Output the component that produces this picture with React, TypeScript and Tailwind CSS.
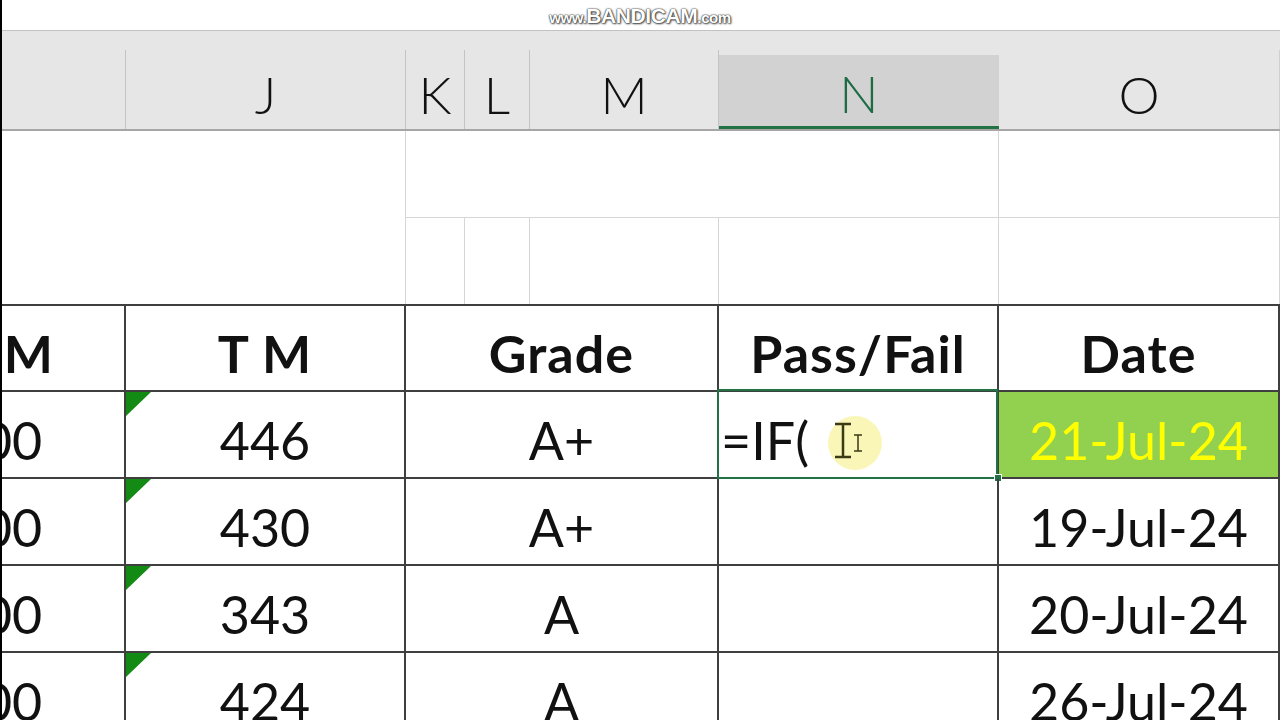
import React from 'react';

const GRID = 'grid grid-cols-[256px_280px_59px_65px_189px_280px_281px] ml-[-130px] w-[1410px]';
const FONT = "font-['Lato','Open_Sans',sans-serif]";

const ROWS = [
  { max: '500', total: '446', grade: 'A+', date: '21-Jul-24' },
  { max: '500', total: '430', grade: 'A+', date: '19-Jul-24' },
  { max: '500', total: '343', grade: 'A', date: '20-Jul-24' },
  { max: '500', total: '424', grade: 'A', date: '26-Jul-24' },
];

function ErrorMark() {
  return (
    <svg className="absolute left-0 top-0" width="25" height="24" viewBox="0 0 25 24">
      <polygon points="0,0 25,0 0,24" fill="#138a13" />
    </svg>
  );
}

function Cursor() {
  return (
    <div className="absolute left-[109px] top-[24px] h-[54px] w-[54px] rounded-full bg-[#f8f29a]/70">
      <svg className="absolute left-0 top-0" width="54" height="54" viewBox="0 0 54 54">
        <g stroke="#3b3a14" fill="none" strokeWidth="2.5">
          <path d="M7 8 H23 M7 41 H23 M15 8 V41" />
        </g>
        <g stroke="#3b3a14" fill="none" strokeWidth="1.5">
          <path d="M26 19 H34 M26 35 H34 M30 19 V35" />
        </g>
      </svg>
    </div>
  );
}

function HeaderLetter({ label, active, last }: { label: string; active?: boolean; last?: boolean }) {
  return (
    <div className="flex h-full flex-col justify-end">
      {active ? (
        <div className="flex h-[74px] items-center justify-center border-b-[3px] border-[#217346] bg-[#d2d2d2] pt-[4px] text-[#1f6b45]">
          {label}
        </div>
      ) : (
        <div
          className={`flex h-[79px] items-center justify-center pt-[8px] ${
            last ? 'border-r border-[#cfcfcf]' : 'border-r border-[#c4c4c4]'
          }`}
        >
          {label}
        </div>
      )}
    </div>
  );
}

export default function App() {
  return (
    <div className={`relative h-[720px] w-[1280px] overflow-hidden bg-white ${FONT} text-[#111]`}>
      {/* recorder watermark */}
      <div className="flex h-[30px] items-center justify-center pt-[1px]">
        <span className="font-['Liberation_Sans',sans-serif] font-bold tracking-tight text-white [text-shadow:0_0_1px_#222,0_0_2px_#333,1px_1px_2px_#555]">
          <span className="text-[15px]">www.</span>
          <span className="text-[21px]">BANDICAM</span>
          <span className="text-[15px]">.com</span>
        </span>
      </div>

      {/* column letters */}
      <div className="h-[101px] border-y border-b-2 border-t-[#c2c2c2] border-b-[#a6a6a6] bg-[#e6e6e6]">
        <div className={`${GRID} h-full text-[52px] font-light leading-none`}>
          <HeaderLetter label="" />
          <HeaderLetter label="J" />
          <HeaderLetter label="K" />
          <HeaderLetter label="L" />
          <HeaderLetter label="M" />
          <HeaderLetter label="N" active />
          <HeaderLetter label="O" last />
        </div>
      </div>

      {/* empty rows above the table */}
      <div className={`${GRID} grid-rows-[87px_86px]`}>
        <div className="col-span-2 row-span-2 border-r border-[#d6d6d6]" />
        <div className="col-span-4 border-b border-r border-[#d6d6d6]" />
        <div className="border-b border-r border-[#d6d6d6]" />
        <div className="border-r border-[#d6d6d6]" />
        <div className="border-r border-[#d6d6d6]" />
        <div className="border-r border-[#d6d6d6]" />
        <div className="border-r border-[#d6d6d6]" />
        <div className="border-r border-[#d6d6d6]" />
      </div>

      {/* table */}
      <div className="border-t-2 border-[#3f3f3f]">
        <div className={`${GRID} text-[52px] font-bold leading-none tracking-[0.02em]`}>
          <div className="flex h-[86px] items-center justify-center border-b-2 border-r-2 border-[#3f3f3f] pt-[10px]">M M</div>
          <div className="flex h-[86px] items-center justify-center border-b-2 border-r-2 border-[#3f3f3f] pt-[10px]">T M</div>
          <div className="col-span-3 flex h-[86px] items-center justify-center border-b-2 border-r-2 border-[#3f3f3f] pt-[10px]">Grade</div>
          <div className="flex h-[86px] items-center justify-center border-b-2 border-r-2 border-[#3f3f3f] pt-[10px]">Pass/Fail</div>
          <div className="flex h-[86px] items-center justify-center border-b-2 border-r-2 border-[#3f3f3f] pt-[10px]">Date</div>
        </div>

        {ROWS.map((r, i) => (
          <div key={i} className={`${GRID} text-[52px] leading-none`}>
            <div className="flex h-[87px] items-center justify-center border-b-2 border-r-2 border-[#3f3f3f] pt-[10px]">{r.max}</div>
            <div className="relative flex h-[87px] items-center justify-center border-b-2 border-r-2 border-[#3f3f3f] pt-[10px]">
              <ErrorMark />
              {r.total}
            </div>
            <div className="col-span-3 flex h-[87px] items-center justify-center border-b-2 border-r-2 border-[#3f3f3f] pt-[10px]">{r.grade}</div>
            <div className="relative flex h-[87px] items-center border-b-2 border-r-2 border-[#3f3f3f] pl-[2px] pt-[10px]">
              {i === 0 && (
                <>
                  <span>=IF(</span>
                  <Cursor />
                  <div className="absolute bottom-[-2px] left-[-2px] right-[-1px] top-[-3px] border-2 border-[#217346]" />
                  <div className="absolute bottom-[-5px] right-[-5px] h-[8px] w-[8px] border border-white bg-[#217346]" />
                </>
              )}
            </div>
            <div
              className={`flex h-[87px] items-center justify-center border-b-2 border-r-2 border-[#3f3f3f] pt-[10px] ${
                i === 0 ? 'bg-[#92d050] text-[#ffff00]' : ''
              }`}
            >
              {r.date}
            </div>
          </div>
        ))}
      </div>

      <div className="absolute left-0 top-0 h-full w-[2px] bg-black" />
    </div>
  );
}
